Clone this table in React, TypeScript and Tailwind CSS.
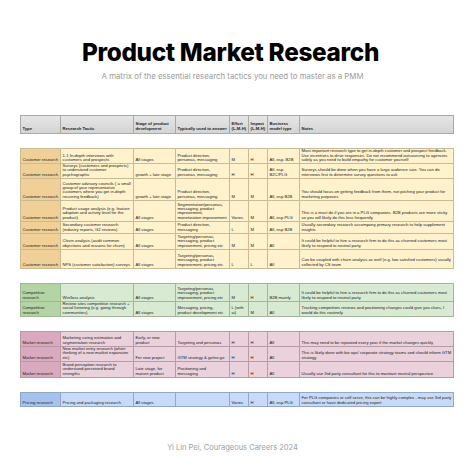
type Row = {
  type: string;
  tactic: string;
  stage: string;
  used: string;
  effort: string;
  impact: string;
  model: string;
  notes: string;
  h: string;
};

type Group = {
  cell: string;
  head: string;
  border: string;
  rows: Row[];
};

const groups: Group[] = [
  {
    cell: "bg-[#fff2cc]",
    head: "bg-[#f0d096]",
    border: "border-[#c9bb95]",
    rows: [
      {
        type: "Customer research",
        tactic: "1-1 In-depth interviews with customers and prospects",
        stage: "All stages",
        used: "Product direction, personas, messaging",
        effort: "M",
        impact: "H",
        model: "All, esp. B2B",
        notes:
          "Most important research type to get in-depth customer and prospect feedback. Use incentives to drive responses. Do not recommend outsourcing to agencies solely as you need to build empathy for customer yourself",
        h: "h-[15px]",
      },
      {
        type: "Customer research",
        tactic: "Surveys (customers and prospects) to understand customer psychographic",
        stage: "growth + late stage",
        used: "Product direction, personas, messaging",
        effort: "H",
        impact: "H",
        model: "All, esp B2C/PLG",
        notes:
          "Surveys should be done when you have a large audience size. You can do interviews first to determine survey questions to ask",
        h: "h-[14px]",
      },
      {
        type: "Customer research",
        tactic:
          "Customer advisory councils ( a small group of your representative customers where you get in-depth recurring feedback)",
        stage: "growth + late stage",
        used: "Product direction, personas, messaging",
        effort: "M",
        impact: "M",
        model: "All, esp B2B",
        notes:
          "You should focus on getting feedback from them, not pitching your product for marketing purposes",
        h: "h-[22px]",
      },
      {
        type: "Customer research",
        tactic:
          "Product usage analysis (e.g. feature adoption and activity level for the product)",
        stage: "All stages",
        used: "Segmentation/personas, messaging, product improvement, monetization improvement",
        effort: "Varies",
        impact: "M",
        model: "All, esp PLG",
        notes:
          "This is a must do if you are in a PLG companies. B2B products are more sticky so you will likely do this less frequently",
        h: "h-[21px]",
      },
      {
        type: "Customer research",
        tactic: "Secondary customer research (industry reports, G2 reviews)",
        stage: "All stages",
        used: "Product direction, messaging",
        effort: "L",
        impact: "M",
        model: "All, esp B2B",
        notes:
          "Usually secondary research accompany primary research to help supplement insights",
        h: "h-[12px]",
      },
      {
        type: "Customer research",
        tactic: "Churn analysis (audit common objections and reasons for churn)",
        stage: "All stages",
        used: "Targeting/personas, messaging, product improvement, pricing etc",
        effort: "M",
        impact: "M",
        model: "All",
        notes:
          "It could be helpful to hire a research firm to do this as churned customers most likely to respond to neutral party",
        h: "h-[16px]",
      },
      {
        type: "Customer research",
        tactic: "NPS (customer satisfaction) surveys",
        stage: "All stages",
        used: "Targeting/personas, messaging, product improvement, pricing etc",
        effort: "L",
        impact: "L",
        model: "All",
        notes:
          "Can be coupled with churn analysis as well (e.g. low satisfied customers) usually collected by CS team",
        h: "h-[19px]",
      },
    ],
  },
  {
    cell: "bg-[#d9ead3]",
    head: "bg-[#b3d4a5]",
    border: "border-[#9fb897]",
    rows: [
      {
        type: "Competitive research",
        tactic: "Win/loss analysis",
        stage: "All stages",
        used: "Targeting/personas, messaging, product improvement, pricing etc",
        effort: "M",
        impact: "H",
        model: "B2B mainly",
        notes:
          "It could be helpful to hire a research firm to do this as churned customers most likely to respond to neutral party",
        h: "h-[18px]",
      },
      {
        type: "Competitive research",
        tactic:
          "Review sites competitive research + social listening (e.g. going through communities)",
        stage: "All stages",
        used: "Messaging, pricing, product development etc",
        effort: "L (with ai)",
        impact: "M",
        model: "All",
        notes:
          "Tracking competitors reviews and positioning changes could give you clues, I would do this routinely",
        h: "h-[15px]",
      },
    ],
  },
  {
    cell: "bg-[#ead1dc]",
    head: "bg-[#d8a9bf]",
    border: "border-[#b99aa8]",
    rows: [
      {
        type: "Market research",
        tactic: "Marketing sizing estimation and segmentation research",
        stage: "Early, or new product",
        used: "Targeting and personas",
        effort: "H",
        impact: "H",
        model: "All",
        notes:
          "This may need to be repeated every year if the market changes quickly",
        h: "h-[15px]",
      },
      {
        type: "Market research",
        tactic:
          "New market entry research (when thinking of a new market expansion etc)",
        stage: "For new project",
        used: "GTM strategy & go/no go",
        effort: "H",
        impact: "H",
        model: "All",
        notes:
          "This is likely done with biz ops/ corporate strategy teams and should inform GTM strategy",
        h: "h-[15px]",
      },
      {
        type: "Market research",
        tactic:
          "Brand perception research to understand perceived brand strengths",
        stage: "Late stage, for mature product",
        used: "Positioning and messaging",
        effort: "H",
        impact: "H",
        model: "All",
        notes:
          "Usually use 3rd party consultant for this to maintain neutral perspective",
        h: "h-[16px]",
      },
    ],
  },
  {
    cell: "bg-[#c9daf8]",
    head: "bg-[#a6c3ef]",
    border: "border-[#93a8c9]",
    rows: [
      {
        type: "Pricing research",
        tactic: "Pricing and packaging research",
        stage: "All stages",
        used: "",
        effort: "Varies",
        impact: "H",
        model: "All, esp PLG",
        notes:
          "For PLG companies or self serve, this can be highly complex - may use 3rd party consultant or have dedicated pricing expert",
        h: "h-[14px]",
      },
    ],
  },
];

const Cols = () => (
  <colgroup>
    <col className="w-[40px]" />
    <col className="w-[73px]" />
    <col className="w-[42px]" />
    <col className="w-[54px]" />
    <col className="w-[19px]" />
    <col className="w-[19px]" />
    <col className="w-[32px]" />
    <col className="w-[154px]" />
  </colgroup>
);

const td = "border px-[1.5px] pb-[0.5px] pt-0 align-bottom text-left";

export default function App() {
  return (
    <div className="w-[474px] h-[474px] bg-white flex flex-col items-center font-['Inter',sans-serif]">
      <h1 className="pt-[37px] mr-[13px] text-[24.3px] leading-[30px] font-extrabold tracking-[-0.3px] text-black">
        Product Market Research
      </h1>
      <p className="mt-[4px] mr-[9px] text-[7.8px] leading-[10px] text-[#9a9a9a]">
        A matrix of the essential research tactics you need to master as a PMM
      </p>

      <div className="self-start ml-[20px] mt-[34px] w-[433px] flex flex-col gap-[14px] font-['Liberation_Sans',Arial,sans-serif] text-[4.2px] leading-[4.4px] text-[#222]">
        {/* header */}
        <table className="table-fixed w-full border-collapse">
          <Cols />
          <tbody>
            <tr className="h-[18px] bg-gradient-to-b from-[#e6e6e6] to-[#d3d3d3] font-bold">
              {[
                "Type",
                "Research Tactic",
                "Stage of product development",
                "Typically used to answer",
                "Effort (L-M-H)",
                "Impact (L-M-H)",
                "Business model type",
                "Notes",
              ].map((t) => (
                <td key={t} className={`${td} border-[#a9a9a9] pb-[2px]`}>
                  {t}
                </td>
              ))}
            </tr>
          </tbody>
        </table>

        {groups.map((g, gi) => (
          <table key={gi} className="table-fixed w-full border-collapse">
            <Cols />
            <tbody>
              {g.rows.map((r, ri) => (
                <tr key={ri} className={`${r.h} ${g.cell}`}>
                  <td className={`${td} ${g.border} ${g.head}`}>{r.type}</td>
                  <td className={`${td} ${g.border}`}>{r.tactic}</td>
                  <td className={`${td} ${g.border}`}>{r.stage}</td>
                  <td className={`${td} ${g.border}`}>{r.used}</td>
                  <td className={`${td} ${g.border}`}>{r.effort}</td>
                  <td className={`${td} ${g.border}`}>{r.impact}</td>
                  <td className={`${td} ${g.border}`}>{r.model}</td>
                  <td className={`${td} ${g.border}`}>{r.notes}</td>
                </tr>
              ))}
            </tbody>
          </table>
        ))}
      </div>

      <p className="mt-[36px] mr-[9px] text-[7.5px] leading-[10px] text-[#a0a0a0]">
        Yi Lin Pei, Courageous Careers 2024
      </p>
    </div>
  );
}
